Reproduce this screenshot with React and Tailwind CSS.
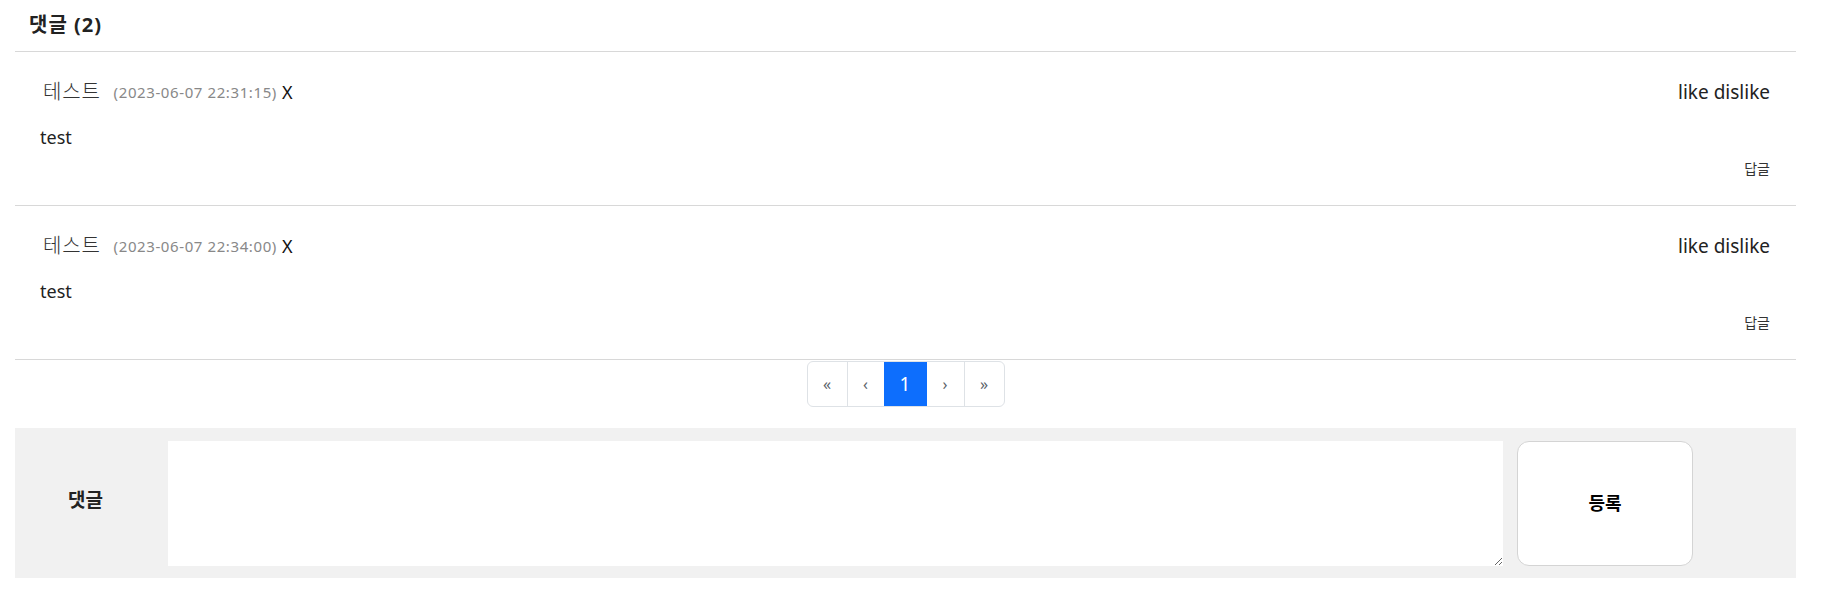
import React from 'react';

const comments = [
  { id: 1, name: '테스트', date: '(2023-06-07 22:31:15)', body: 'test' },
  { id: 2, name: '테스트', date: '(2023-06-07 22:34:00)', body: 'test' },
];

const font = { fontFamily: '"Noto Sans", "Noto Sans CJK KR", sans-serif' };

function Comment({ c }) {
  return (
    <div className="h-[154px] border-b border-[#d8d8d8] pl-[25px] pr-[26px] pt-[28px]">
      {/* name / date / delete + like */}
      <div className="flex h-[24px] items-center justify-between">
        <div className="flex items-center">
          <span className="ml-[3px] text-[20px] font-light leading-[24px] tracking-[0.8px] text-[#333]">{c.name}</span>
          <span className="ml-[13px] text-[15px] leading-[24px] tracking-[0.6px] text-[#888]">{c.date}</span>
          <span className="ml-[5px] text-[18px] leading-[24px] text-[#111]">X</span>
        </div>
        <div className="text-[19px] leading-[24px] text-[#222]">like dislike</div>
      </div>
      <div className="mt-[21px] text-[18px] leading-[24px] text-[#222]">{c.body}</div>
      <div className="mt-[10px] flex justify-end">
        <span className="text-[14px] leading-[20px] text-[#333]">답글</span>
      </div>
    </div>
  );
}

function Pagination() {
  const cell = 'flex h-full items-center justify-center border-l border-[#dee2e6] text-[#5c636a]';
  return (
    <div className="flex justify-center pt-[1px]">
      <div className="flex h-[46px] overflow-hidden rounded-[6px] border border-[#dee2e6] text-[16px]">
        <span className="flex h-full w-[39px] items-center justify-center text-[#5c636a]">«</span>
        <span className={`${cell} w-[37px]`}>‹</span>
        <span className="flex h-full w-[43px] items-center justify-center bg-[#0d6efd] text-[19px] text-white">1</span>
        <span className="flex h-full w-[37px] items-center justify-center text-[#5c636a]">›</span>
        <span className={`${cell} w-[40px]`}>»</span>
      </div>
    </div>
  );
}

export default function App() {
  return (
    <div className="min-h-[599px] bg-white" style={font}>
      <div className="ml-[15px] w-[1781px]">
        {/* Header */}
        <div className="flex h-[52px] items-center border-b border-[#d8d8d8] px-[14px] pb-[2px]">
          <h2 className="text-[20px] font-bold tracking-[1px] text-[#222]">댓글 (2)</h2>
        </div>

        {comments.map((c) => (
          <Comment key={c.id} c={c} />
        ))}

        <Pagination />

        {/* Write form */}
        <div className="mt-[21px] flex h-[150px] items-center bg-[#f1f1f1]">
          <div className="flex w-[153px] items-center justify-center pb-[6px] pr-[12px] text-[19px] font-bold text-[#222]">
            댓글
          </div>
          <textarea className="h-[125px] w-[1335px] bg-white p-2 outline-none" />
          <button className="ml-[14px] h-[125px] w-[176px] rounded-[12px] border border-[#d4d4d4] bg-white text-[18px] font-bold text-black">
            등록
          </button>
        </div>
      </div>
    </div>
  );
}
